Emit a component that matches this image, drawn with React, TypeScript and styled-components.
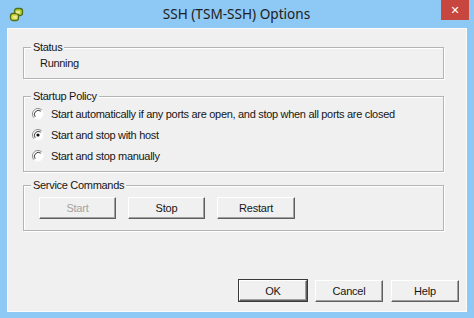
import styled, { createGlobalStyle } from "styled-components";

const GlobalStyle = createGlobalStyle`
    html, body {
        margin: 0;
        padding: 0;
        background: #8ec8f4;
    }
`;

// 라디오 옵션
const policyOptions = [
    { id: "auto", label: "Start automatically if any ports are open, and stop when all ports are closed" },
    { id: "host", label: "Start and stop with host" },
    { id: "manual", label: "Start and stop manually" },
];

function AppIcon() {
    return (
        <svg width="15" height="15" viewBox="0 0 15 15">
            <rect x="5.5" y="1.5" width="8" height="7" rx="2.5" fill="#b9cf3a" stroke="#4f7018" strokeWidth="1.3" />
            <rect x="1.5" y="6.5" width="8" height="7" rx="2.5" fill="#dcd84e" stroke="#4f7018" strokeWidth="1.3" />
            <rect x="7" y="4" width="4" height="2.5" rx="1" fill="#eeeb92" />
            <rect x="4" y="9" width="4" height="2.5" rx="1" fill="#eeeb92" />
        </svg>
    );
}

function RadioMark({ checked }: { checked: boolean }) {
    return (
        <svg width="12" height="12" viewBox="0 0 12 12">
            <circle cx="6" cy="6" r="5.5" fill="#ffffff" />
            <path d="M9.9 2.1 A5.5 5.5 0 0 0 2.1 9.9" fill="none" stroke="#8a8a8a" strokeWidth="1" />
            <path d="M8.8 3.2 A4 4 0 0 0 3.2 8.8" fill="none" stroke="#3c3c3c" strokeWidth="1" />
            <path d="M2.1 9.9 A5.5 5.5 0 0 0 9.9 2.1" fill="none" stroke="#f4f4f4" strokeWidth="1" />
            {checked && <circle cx="6" cy="6" r="1.6" fill="#111111" />}
        </svg>
    );
}

function App() {
    return (
        <>
            <GlobalStyle />
            <Frame>
                <TitleBar>
                    <IconSlot><AppIcon /></IconSlot>
                    <Title>SSH (TSM-SSH) Options</Title>
                    <CloseButton>✕</CloseButton>
                </TitleBar>

                <Client>
                    <Group $top={18}>
                        <GroupLabel>Status</GroupLabel>
                        <StatusText>Running</StatusText>
                    </Group>

                    <Group $top={17}>
                        <GroupLabel>Startup Policy</GroupLabel>
                        <RadioList>
                            {policyOptions.map(o => (
                                <RadioRow key={o.id}>
                                    <RadioMark checked={o.id === "host"} />
                                    <span>{o.label}</span>
                                </RadioRow>
                            ))}
                        </RadioList>
                    </Group>

                    <Group $top={13}>
                        <GroupLabel>Service Commands</GroupLabel>
                        <CommandRow>
                            <Button $width={77} disabled>Start</Button>
                            <Button $width={77}>Stop</Button>
                            <Button $width={78}>Restart</Button>
                        </CommandRow>
                    </Group>

                    <Footer>
                        <Button $width={68} $default>OK</Button>
                        <Button $width={68}>Cancel</Button>
                        <Button $width={68}>Help</Button>
                    </Footer>
                </Client>
            </Frame>
        </>
    );
}

export default App;

const Frame = styled.div`
    width: 474px;
    height: 318px;
    background: #8ec8f4;
    display: flex;
    flex-direction: column;
    box-sizing: border-box;
    padding: 0 7px 6px 7px;
`;

const TitleBar = styled.div`
    height: 28px;
    display: flex;
    align-items: center;
    position: relative;
    flex-shrink: 0;
`;

const IconSlot = styled.div`
    width: 15px;
    height: 15px;
    margin-left: 2px;
`;

const Title = styled.div`
    flex: 1;
    text-align: center;
    font-family: "Noto Sans", "Open Sans", sans-serif;
    font-size: 13.6px;
    color: #202020;
    margin-top: -1px;
    padding-right: 18px;
`;

const CloseButton = styled.div`
    position: absolute;
    top: 0;
    right: -2px;
    width: 28px;
    height: 20px;
    background: #c7463d;
    color: #ffffff;
    font-family: "DejaVu Sans", sans-serif;
    font-size: 11px;
    font-weight: bold;
    display: flex;
    align-items: center;
    justify-content: center;
`;

const Client = styled.div`
    flex: 1;
    background: #f0f0f0;
    border: 1px solid #fbfbfb;
    display: flex;
    flex-direction: column;
    padding: 0 22px 9px 15px;
    font-family: "Liberation Sans", Arial, sans-serif;
    font-size: 11px;
    letter-spacing: -0.3px;
    color: #161616;
`;

const Group = styled.div<{ $top: number }>`
    margin-top: ${p => p.$top}px;
    border: 1px solid #b4b4b4;
    box-shadow: inset 1px 1px 0 #ffffff, 1px 1px 0 #ffffff;
    display: flex;
    flex-direction: column;
`;

const GroupLabel = styled.div`
    margin: -7px 0 0 7px;
    padding: 0 2px;
    line-height: 13px;
    background: #f0f0f0;
    width: fit-content;
`;

const StatusText = styled.div`
    margin: 3px 0 8px 16px;
    line-height: 13px;
`;

const RadioList = styled.div`
    display: flex;
    flex-direction: column;
    padding: 0 0 5px 8px;
`;

const RadioRow = styled.div`
    height: 21px;
    display: flex;
    align-items: center;
    gap: 7px;
`;

const CommandRow = styled.div`
    display: flex;
    gap: 12px;
    padding: 5px 0 11px 15px;
`;

const Footer = styled.div`
    margin-top: auto;
    display: flex;
    justify-content: flex-end;
    gap: 8px;
    margin-right: -15px;
`;

const Button = styled.button<{ $width: number; $default?: boolean }>`
    width: ${p => p.$width}px;
    height: ${p => p.$default ? 21 : 22}px;
    box-sizing: border-box;
    padding: 0;
    font-family: "Liberation Sans", Arial, sans-serif;
    font-size: 11px;
    letter-spacing: -0.2px;
    color: #161616;
    background: #f0f0f0;
    border: 1px solid;
    border-color: #ffffff #5f5f5f #5f5f5f #ffffff;
    box-shadow: inset -1px -1px 0 #a0a0a0;
    outline: ${p => p.$default ? "1px solid #3a3a3a" : "none"};
    outline-offset: 0;

    &:disabled {
        color: #a3a3a3;
    }
`;
